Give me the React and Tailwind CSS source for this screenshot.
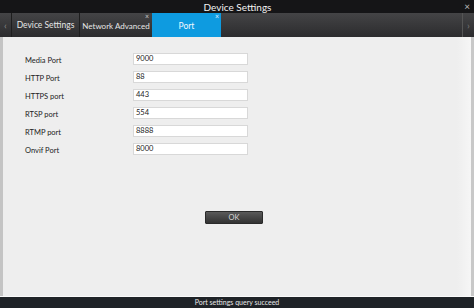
import React from "react";

const rows = [
  ["Media Port", "9000"],
  ["HTTP Port", "88"],
  ["HTTPS port", "443"],
  ["RTSP port", "554"],
  ["RTMP port", "8888"],
  ["Onvif Port", "8000"],
];

const ui = { fontFamily: "Lato, 'Liberation Sans', sans-serif" };

export default function App() {
  return (
    <div
      className="w-[474px] h-[308px] flex flex-col bg-[#eeeeee] overflow-hidden"
      style={ui}
    >
      {/* title bar */}
      <div className="relative h-[13px] bg-[#151517] flex items-center justify-center shrink-0">
        <span className="text-[10px] leading-none text-[#f2f2f2] whitespace-nowrap pl-[1px]">Device Settings</span>
        <span className="absolute right-[4px] top-[1px] text-[10px] leading-none text-[#bbbbbb]">×</span>
      </div>
      {/* tab bar */}
      <div className="h-[24px] flex shrink-0 bg-gradient-to-b from-[#444446] to-[#2c2c2e]">
        <div className="w-[12px] flex items-center justify-center border-r border-[#1e1e1e] text-[#888] text-[10px]">‹</div>
        <div className="w-[68px] flex items-center justify-center border-r border-[#1e1e1e] text-[8.5px] text-[#e6e6e6] whitespace-nowrap">Device Settings</div>
        <div className="relative w-[72px] flex items-center justify-center text-[8px] text-[#e6e6e6] whitespace-nowrap pt-[2px]">
          Network Advanced
          <span className="absolute right-[3px] top-[0px] text-[7px] leading-none text-[#cccccc]">×</span>
        </div>
        <div className="relative w-[69px] flex items-center justify-center bg-[#0e9be0] text-[8.5px] text-[#f0f8ff] pt-[2px]">
          Port
          <span className="absolute right-[2px] top-[0px] text-[7px] leading-none text-[#e0f0ff]">×</span>
        </div>
        <div className="flex-1" />
        <div className="w-[12px] flex items-center justify-center border-l border-[#555] text-[#777] text-[10px]">›</div>
      </div>
      {/* content */}
      <div className="flex-1 flex border-l-[3px] border-[#c4c4c4]">
        <div className="flex-1 flex flex-col pt-[16px]">
          <div className="flex flex-col gap-[6px] pl-[22px]">
            {rows.map(([label, val]) => (
              <div key={label} className="flex items-center h-[12px]">
                <span className="w-[108px] text-[7.5px] text-[#222] pt-[3px]">{label}</span>
                <div className="w-[115px] h-[12px] bg-white border border-[#d8d8d8] flex items-center pl-[2px] text-[7.5px] text-[#222]">
                  {val}
                </div>
              </div>
            ))}
          </div>
          <div className="flex justify-start pl-[202px] mt-[56px]">
            <div className="w-[58px] h-[13px] rounded-[1px] bg-gradient-to-b from-[#5a5a5a] to-[#333333] border border-[#2a2a2a] flex items-center justify-center text-[7.5px] text-[#d8d8d8]">
              OK
            </div>
          </div>
        </div>
        <div className="w-[14px] bg-gradient-to-r from-[#eeeeee] to-[#f6f6f6]" />
        <div className="w-[3px] bg-[#c8c8c8]" />
      </div>
      <div className="h-[1px] bg-[#fafafa] shrink-0" />
      {/* status bar */}
      <div className="h-[11px] bg-[#1f2327] flex items-center justify-center shrink-0">
        <span className="text-[7px] leading-none text-[#e8e8e8]">Port settings query succeed</span>
      </div>
    </div>
  );
}
